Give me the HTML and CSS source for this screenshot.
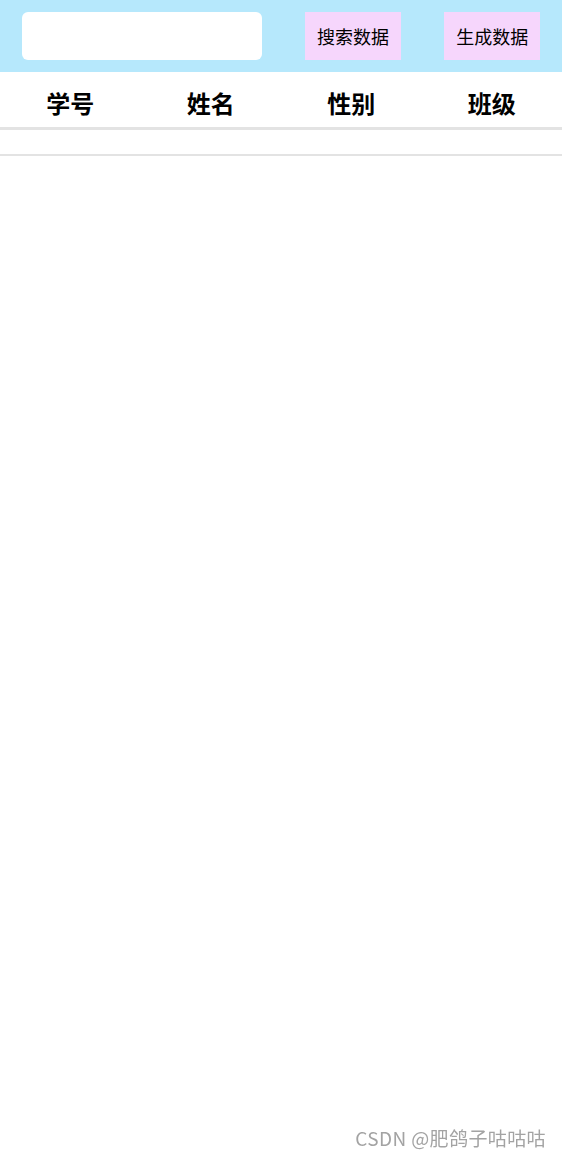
FILE: index.html
```html
<!DOCTYPE html>
<html lang="zh-CN">
<head>
<meta charset="utf-8">
<title>学生数据</title>
<link rel="stylesheet" href="styles.css">
</head>
<body>
<div class="toolbar">
  <input class="search-input" type="text">
  <button class="action-btn">搜索数据</button>
  <button class="action-btn">生成数据</button>
</div>
<div class="table">
  <div class="row head-row">
    <div class="cell">学号</div>
    <div class="cell">姓名</div>
    <div class="cell">性别</div>
    <div class="cell">班级</div>
  </div>
  <div class="row empty-row">
    <div class="cell"></div>
    <div class="cell"></div>
    <div class="cell"></div>
    <div class="cell"></div>
  </div>
</div>
<div class="watermark">CSDN @肥鸽子咕咕咕</div>
</body>
</html>
```
FILE: styles.css
```css
html, body {
  margin: 0;
  padding: 0;
  background: #ffffff;
  font-family: "Noto Sans CJK SC", "Noto Sans", sans-serif;
}

.toolbar {
  height: 72px;
  background: #b6e8fc;
  display: flex;
  align-items: center;
  justify-content: space-around;
}

.search-input {
  width: 240px;
  height: 48px;
  box-sizing: border-box;
  border: none;
  border-radius: 6px;
  background: #ffffff;
  outline: none;
  padding: 0 10px;
  font-size: 16px;
}

.action-btn {
  width: 96px;
  height: 48px;
  border: none;
  margin: 0;
  padding: 0;
  background: #f6d6fc;
  color: #000000;
  font-family: "Noto Sans CJK SC", sans-serif;
  font-size: 18px;
  line-height: 48px;
}

.row {
  display: grid;
  grid-template-columns: repeat(4, 1fr);
}

.head-row {
  height: 55px;
  border-bottom: 3px solid #e3e3e3;
}

.head-row .cell {
  display: flex;
  align-items: center;
  justify-content: center;
  padding-top: 5px;
  font-size: 24px;
  font-weight: 700;
  color: #000000;
}

.empty-row {
  height: 24px;
  border-bottom: 2px solid #e3e3e3;
}

.watermark {
  position: fixed;
  right: 16px;
  bottom: 5px;
  font-family: "Noto Sans CJK SC", sans-serif;
  font-size: 19px;
  letter-spacing: 0.4px;
  color: #a3a3a3;
}
```
